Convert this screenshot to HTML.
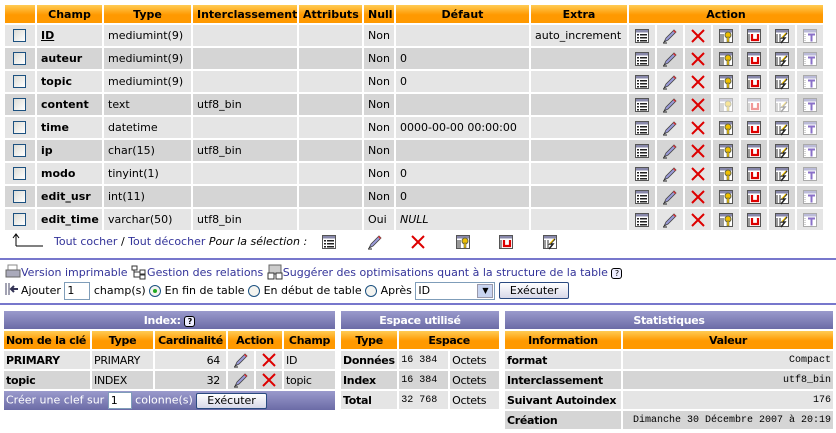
<!DOCTYPE html>
<html><head><meta charset="utf-8"><style>
*{box-sizing:border-box;margin:0;padding:0}
body{width:836px;height:433px;background:#fff;font-family:"DejaVu Sans",Verdana,sans-serif;font-size:11px;color:#000;position:relative;overflow:hidden}
table{border-collapse:separate;border-spacing:2px;table-layout:fixed;position:absolute}
td,th{padding:0 4px;white-space:nowrap;overflow:hidden;vertical-align:middle}
th{background:linear-gradient(#ffcc55,#ff9900 55%,#ff9900);font-weight:bold;text-align:center;height:18px}
tr.a td{background:#e5e5e5}
tr.b td{background:#d5d5d5}
.main tr td{height:21px}
.sm td,.sm th{padding:0 2px;letter-spacing:-0.3px}
.cb{display:inline-block;width:13px;height:13px;border:1px solid #1c5180;background:linear-gradient(135deg,#dcdcd6,#fff);vertical-align:middle;margin-left:4px}
.ic{padding:0 !important;text-align:center}
.ic svg{display:block;margin:0 auto}
b{font-weight:bold}
.mono{font-family:"Liberation Mono",monospace;font-size:10px;letter-spacing:0 !important}
.ph{background:linear-gradient(#9a9acc,#6b6ba6);color:#fff;font-weight:bold;text-align:center;height:18px}
a{color:#333399;text-decoration:none}
.line{position:absolute;left:0;width:836px;height:2px;background:#7777cc}
.btn{display:inline-block;border:1px solid #2a4a80;border-radius:2px;background:linear-gradient(#fff,#d8d8e8);padding:0 10px;height:16px;line-height:14px;font-size:11px;color:#000;letter-spacing:0}
.inp{display:inline-block;background:#fff;border:1px solid #7f9db9;height:18px;line-height:16px;padding-left:2px;vertical-align:middle}
.rad{display:inline-block;width:12px;height:12px;border:1px solid #1c5180;border-radius:50%;background:#f4f4f0;vertical-align:middle;position:relative}
</style></head><body>
<svg width="0" height="0" style="position:absolute">
<defs>
<symbol id="prop" viewBox="0 0 16 16"><rect x="1.5" y="1.5" width="13" height="13" fill="#fff" stroke="#555"/><rect x="2" y="2" width="12" height="2.5" fill="#8888aa"/><rect x="3" y="6" width="2" height="1.5" fill="#222"/><rect x="3" y="9" width="2" height="1.5" fill="#222"/><rect x="3" y="12" width="2" height="1.5" fill="#222"/><rect x="6" y="6" width="7" height="1.5" fill="#222"/><rect x="6" y="9" width="7" height="1.5" fill="#222"/><rect x="6" y="12" width="7" height="1.5" fill="#222"/></symbol>
<symbol id="pen" viewBox="0 0 16 16"><path d="M2 14 L4 10 L12 2 L14 4 L6 12 Z" fill="#9a9ad8" stroke="#444" stroke-width=".8"/><path d="M11 3 L12 2 L14 4 L13 5Z" fill="#d33"/><path d="M2 14 L4 12 L3 14Z" fill="#222"/><path d="M1 15 H5" stroke="#222"/></symbol>
<symbol id="del" viewBox="0 0 16 16"><path d="M2 2 L14 14 M14 2 L2 14" stroke="#d00" stroke-width="2"/></symbol>
<symbol id="key" viewBox="0 0 16 16"><rect x="1.5" y="1.5" width="13" height="13" fill="#fff" stroke="#555"/><rect x="2" y="2" width="12" height="2.5" fill="#8888aa"/><path d="M3 6v8M5 6v8" stroke="#333"/><circle cx="10" cy="7" r="3" fill="#f0c000" stroke="#664"/><rect x="9" y="9" width="2" height="5" fill="#f0c000" stroke="#664" stroke-width=".6"/></symbol>
<symbol id="uni" viewBox="0 0 16 16"><rect x="1.5" y="1.5" width="13" height="13" fill="#fff" stroke="#555"/><rect x="2" y="2" width="12" height="2.5" fill="#8888aa"/><path d="M3 6v8" stroke="#333"/><path d="M6 6v6h6V6" stroke="#d00" stroke-width="2.2" fill="none"/></symbol>
<symbol id="ft" viewBox="0 0 16 16"><rect x="1.5" y="1.5" width="13" height="13" fill="#fff" stroke="#555"/><rect x="2" y="2" width="12" height="2.5" fill="#8888aa"/><path d="M3 6v8M6 6v8" stroke="#333"/><path d="M13 5 L8 10 L11 10 L7 15" stroke="#222" stroke-width="1.5" fill="none"/><path d="M12 5 L8 9.5" stroke="#f0c000"/></symbol>
<symbol id="txt" viewBox="0 0 16 16"><rect x="1.5" y="1.5" width="13" height="13" fill="#fff" stroke="#aaa"/><rect x="2" y="2" width="12" height="2.5" fill="#bbbbd8"/><path d="M3 6v8" stroke="#aaa" stroke-dasharray="1 1"/><path d="M6 6.5h7M9.5 6.5v7" stroke="#8a70c8" stroke-width="2"/></symbol>
</defs></svg>

<table class="main" style="left:3px;top:3px;width:821px">
<colgroup><col style="width:30px"><col style="width:65px"><col style="width:87px"><col style="width:104px"><col style="width:63px"><col style="width:30px"><col style="width:133px"><col style="width:96px"><col style="width:26px"><col style="width:26px"><col style="width:26px"><col style="width:26px"><col style="width:26px"><col style="width:26px"><col style="width:26px"></colgroup>
<tr><th></th><th>Champ</th><th>Type</th><th>Interclassement</th><th>Attributs</th><th>Null</th><th>Défaut</th><th>Extra</th><th colspan="7">Action</th></tr>
<tr class="a"><td><span class="cb"></span></td><td><b><u>ID</u></b></td><td>mediumint(9)</td><td></td><td></td><td>Non</td><td></td><td>auto_increment</td><td class="ic"><svg width="16" height="16"><use href="#prop"/></svg></td><td class="ic"><svg width="16" height="16"><use href="#pen"/></svg></td><td class="ic"><svg width="16" height="16"><use href="#del"/></svg></td><td class="ic"><svg width="16" height="16"><use href="#key"/></svg></td><td class="ic"><svg width="16" height="16"><use href="#uni"/></svg></td><td class="ic"><svg width="16" height="16"><use href="#ft"/></svg></td><td class="ic"><svg width="16" height="16"><use href="#txt"/></svg></td></tr>
<tr class="b"><td><span class="cb"></span></td><td><b>auteur</b></td><td>mediumint(9)</td><td></td><td></td><td>Non</td><td>0</td><td></td><td class="ic"><svg width="16" height="16"><use href="#prop"/></svg></td><td class="ic"><svg width="16" height="16"><use href="#pen"/></svg></td><td class="ic"><svg width="16" height="16"><use href="#del"/></svg></td><td class="ic"><svg width="16" height="16"><use href="#key"/></svg></td><td class="ic"><svg width="16" height="16"><use href="#uni"/></svg></td><td class="ic"><svg width="16" height="16"><use href="#ft"/></svg></td><td class="ic"><svg width="16" height="16"><use href="#txt"/></svg></td></tr>
<tr class="a"><td><span class="cb"></span></td><td><b>topic</b></td><td>mediumint(9)</td><td></td><td></td><td>Non</td><td>0</td><td></td><td class="ic"><svg width="16" height="16"><use href="#prop"/></svg></td><td class="ic"><svg width="16" height="16"><use href="#pen"/></svg></td><td class="ic"><svg width="16" height="16"><use href="#del"/></svg></td><td class="ic"><svg width="16" height="16"><use href="#key"/></svg></td><td class="ic"><svg width="16" height="16"><use href="#uni"/></svg></td><td class="ic"><svg width="16" height="16"><use href="#ft"/></svg></td><td class="ic"><svg width="16" height="16"><use href="#txt"/></svg></td></tr>
<tr class="b"><td><span class="cb"></span></td><td><b>content</b></td><td>text</td><td>utf8_bin</td><td></td><td>Non</td><td></td><td></td><td class="ic"><svg width="16" height="16"><use href="#prop"/></svg></td><td class="ic"><svg width="16" height="16"><use href="#pen"/></svg></td><td class="ic"><svg width="16" height="16"><use href="#del"/></svg></td><td class="ic" style="opacity:.4"><svg width="16" height="16"><use href="#key"/></svg></td><td class="ic" style="opacity:.4"><svg width="16" height="16"><use href="#uni"/></svg></td><td class="ic" style="opacity:.4"><svg width="16" height="16"><use href="#ft"/></svg></td><td class="ic"><svg width="16" height="16"><use href="#txt"/></svg></td></tr>
<tr class="a"><td><span class="cb"></span></td><td><b>time</b></td><td>datetime</td><td></td><td></td><td>Non</td><td>0000-00-00 00:00:00</td><td></td><td class="ic"><svg width="16" height="16"><use href="#prop"/></svg></td><td class="ic"><svg width="16" height="16"><use href="#pen"/></svg></td><td class="ic"><svg width="16" height="16"><use href="#del"/></svg></td><td class="ic"><svg width="16" height="16"><use href="#key"/></svg></td><td class="ic"><svg width="16" height="16"><use href="#uni"/></svg></td><td class="ic"><svg width="16" height="16"><use href="#ft"/></svg></td><td class="ic"><svg width="16" height="16"><use href="#txt"/></svg></td></tr>
<tr class="b"><td><span class="cb"></span></td><td><b>ip</b></td><td>char(15)</td><td>utf8_bin</td><td></td><td>Non</td><td></td><td></td><td class="ic"><svg width="16" height="16"><use href="#prop"/></svg></td><td class="ic"><svg width="16" height="16"><use href="#pen"/></svg></td><td class="ic"><svg width="16" height="16"><use href="#del"/></svg></td><td class="ic"><svg width="16" height="16"><use href="#key"/></svg></td><td class="ic"><svg width="16" height="16"><use href="#uni"/></svg></td><td class="ic"><svg width="16" height="16"><use href="#ft"/></svg></td><td class="ic"><svg width="16" height="16"><use href="#txt"/></svg></td></tr>
<tr class="a"><td><span class="cb"></span></td><td><b>modo</b></td><td>tinyint(1)</td><td></td><td></td><td>Non</td><td>0</td><td></td><td class="ic"><svg width="16" height="16"><use href="#prop"/></svg></td><td class="ic"><svg width="16" height="16"><use href="#pen"/></svg></td><td class="ic"><svg width="16" height="16"><use href="#del"/></svg></td><td class="ic"><svg width="16" height="16"><use href="#key"/></svg></td><td class="ic"><svg width="16" height="16"><use href="#uni"/></svg></td><td class="ic"><svg width="16" height="16"><use href="#ft"/></svg></td><td class="ic"><svg width="16" height="16"><use href="#txt"/></svg></td></tr>
<tr class="b"><td><span class="cb"></span></td><td><b>edit_usr</b></td><td>int(11)</td><td></td><td></td><td>Non</td><td>0</td><td></td><td class="ic"><svg width="16" height="16"><use href="#prop"/></svg></td><td class="ic"><svg width="16" height="16"><use href="#pen"/></svg></td><td class="ic"><svg width="16" height="16"><use href="#del"/></svg></td><td class="ic"><svg width="16" height="16"><use href="#key"/></svg></td><td class="ic"><svg width="16" height="16"><use href="#uni"/></svg></td><td class="ic"><svg width="16" height="16"><use href="#ft"/></svg></td><td class="ic"><svg width="16" height="16"><use href="#txt"/></svg></td></tr>
<tr class="a"><td><span class="cb"></span></td><td><b>edit_time</b></td><td>varchar(50)</td><td>utf8_bin</td><td></td><td>Oui</td><td><i>NULL</i></td><td></td><td class="ic"><svg width="16" height="16"><use href="#prop"/></svg></td><td class="ic"><svg width="16" height="16"><use href="#pen"/></svg></td><td class="ic"><svg width="16" height="16"><use href="#del"/></svg></td><td class="ic"><svg width="16" height="16"><use href="#key"/></svg></td><td class="ic"><svg width="16" height="16"><use href="#uni"/></svg></td><td class="ic"><svg width="16" height="16"><use href="#ft"/></svg></td><td class="ic"><svg width="16" height="16"><use href="#txt"/></svg></td></tr>
</table>

<svg style="position:absolute;left:12px;top:233px" width="32" height="14"><path d="M4 13V2M1 5L4 1L7 5M4 13H31" stroke="#000" fill="none"/></svg>
<div style="position:absolute;left:54px;top:235px;white-space:nowrap"><a>Tout cocher</a> / <a>Tout décocher</a> <i>Pour la sélection :</i></div>
<svg style="position:absolute;left:321px;top:234px" width="16" height="16"><use href="#prop"/></svg>
<svg style="position:absolute;left:367px;top:234px" width="16" height="16"><use href="#pen"/></svg>
<svg style="position:absolute;left:410px;top:234px" width="16" height="16"><use href="#del"/></svg>
<svg style="position:absolute;left:455px;top:234px" width="16" height="16"><use href="#key"/></svg>
<svg style="position:absolute;left:498px;top:234px" width="16" height="16"><use href="#uni"/></svg>
<svg style="position:absolute;left:542px;top:234px" width="16" height="16"><use href="#ft"/></svg>
<div class="line" style="top:258px"></div>

<div style="position:absolute;left:5px;top:264px;white-space:nowrap">
<svg width="16" height="16" style="vertical-align:-4px"><rect x="3" y="1" width="9" height="6" fill="#fff" stroke="#888"/><rect x="1" y="6" width="14" height="7" fill="#aab" stroke="#666"/></svg><a>Version imprimable</a>
<svg width="16" height="16" style="vertical-align:-4px"><rect x="1" y="2" width="5" height="4" fill="#fff" stroke="#333"/><rect x="9" y="6" width="5" height="4" fill="#fff" stroke="#333"/><rect x="9" y="11" width="5" height="4" fill="#fff" stroke="#333"/><path d="M3 6v7h6M3 8h6" stroke="#333" fill="none"/></svg><a>Gestion des relations</a>
<svg width="16" height="16" style="vertical-align:-4px"><rect x="2" y="1" width="12" height="9" fill="#ccc" stroke="#666"/><rect x="1" y="9" width="6" height="6" fill="#fff" stroke="#333"/><rect x="9" y="9" width="6" height="6" fill="#fff" stroke="#333"/></svg><a>Suggérer des optimisations quant à la structure de la table</a>
<span style="display:inline-block;width:11px;height:11px;border:1px solid #000;border-radius:3px;font-size:8px;line-height:9px;text-align:center;background:#eef">?</span></div>
<div style="position:absolute;left:5px;top:281px;white-space:nowrap;line-height:18px">
<svg width="16" height="16" style="vertical-align:-3px"><path d="M1 2v12M4 2v12" stroke="#446" /><path d="M13 8H6M9 5L6 8L9 11" stroke="#335" stroke-width="2" fill="none"/></svg>Ajouter <span class="inp" style="width:26px">1</span> champ(s) <span class="rad"><span style="position:absolute;left:3px;top:3px;width:4px;height:4px;border-radius:50%;background:#2a2"></span></span> En fin de table <span class="rad"></span> En début de table <span class="rad"></span> Après <span class="inp" style="width:80px;font-size:11px">ID<span style="float:right;width:16px;height:14px;margin:1px;background:#c8d4f0;border:1px solid #99a;font-size:8px;text-align:center;line-height:12px">▼</span></span> <span class="btn" style="height:17px;line-height:15px">Exécuter</span></div>
<div class="line" style="top:303px"></div>

<table class="sm" style="left:2px;top:309px;width:333px">
<colgroup><col style="width:86px"><col style="width:61px"><col style="width:71px"><col style="width:26px"><col style="width:26px"><col style="width:51px"></colgroup>
<tr><td colspan="6" class="ph">Index: <span style="display:inline-block;width:11px;height:11px;border:1px solid #000;border-radius:3px;font-size:8px;line-height:9px;background:#eef;color:#000">?</span></td></tr>
<tr><th style="text-align:left">Nom de la clé</th><th>Type</th><th>Cardinalité</th><th colspan="2">Action</th><th>Champ</th></tr>
<tr class="a"><td style="height:18px"><b>PRIMARY</b></td><td>PRIMARY</td><td style="text-align:right;padding-right:6px">64</td><td class="ic"><svg width="16" height="16"><use href="#pen"/></svg></td><td class="ic"><svg width="16" height="16"><use href="#del"/></svg></td><td>ID</td></tr>
<tr class="b"><td style="height:18px"><b>topic</b></td><td>INDEX</td><td style="text-align:right;padding-right:6px">32</td><td class="ic"><svg width="16" height="16"><use href="#pen"/></svg></td><td class="ic"><svg width="16" height="16"><use href="#del"/></svg></td><td>topic</td></tr>
<tr><td colspan="6" class="ph" style="text-align:left;font-weight:normal;height:19px;letter-spacing:0">Créer une clef sur <span class="inp" style="width:24px;color:#000;height:17px">1</span> colonne(s) <span class="btn">Exécuter</span></td></tr>
</table>

<table class="sm" style="left:339px;top:309px;width:162px">
<colgroup><col style="width:53px"><col style="width:46px"><col style="width:46px"></colgroup>
<tr><td colspan="3" class="ph">Espace utilisé</td></tr>
<tr><th>Type</th><th colspan="2">Espace</th></tr>
<tr class="a"><td style="height:18px"><b>Données</b></td><td class="mono">16 384</td><td>Octets</td></tr>
<tr class="b"><td style="height:18px"><b>Index</b></td><td class="mono">16 384</td><td>Octets</td></tr>
<tr class="a"><td style="height:18px"><b>Total</b></td><td class="mono">32 768</td><td>Octets</td></tr>
</table>

<table class="sm" style="left:503px;top:309px;width:332px">
<colgroup><col style="width:116px"><col style="width:210px"></colgroup>
<tr><td colspan="2" class="ph">Statistiques</td></tr>
<tr><th>Information</th><th>Valeur</th></tr>
<tr class="a"><td style="height:18px"><b>format</b></td><td class="mono" style="text-align:right">Compact</td></tr>
<tr class="b"><td style="height:18px"><b>Interclassement</b></td><td class="mono" style="text-align:right">utf8_bin</td></tr>
<tr class="a"><td style="height:18px"><b>Suivant Autoindex</b></td><td class="mono" style="text-align:right">176</td></tr>
<tr class="b"><td style="height:18px"><b>Création</b></td><td class="mono" style="text-align:right">Dimanche 30 Décembre 2007 à 20:19</td></tr>
</table>
</body></html>
